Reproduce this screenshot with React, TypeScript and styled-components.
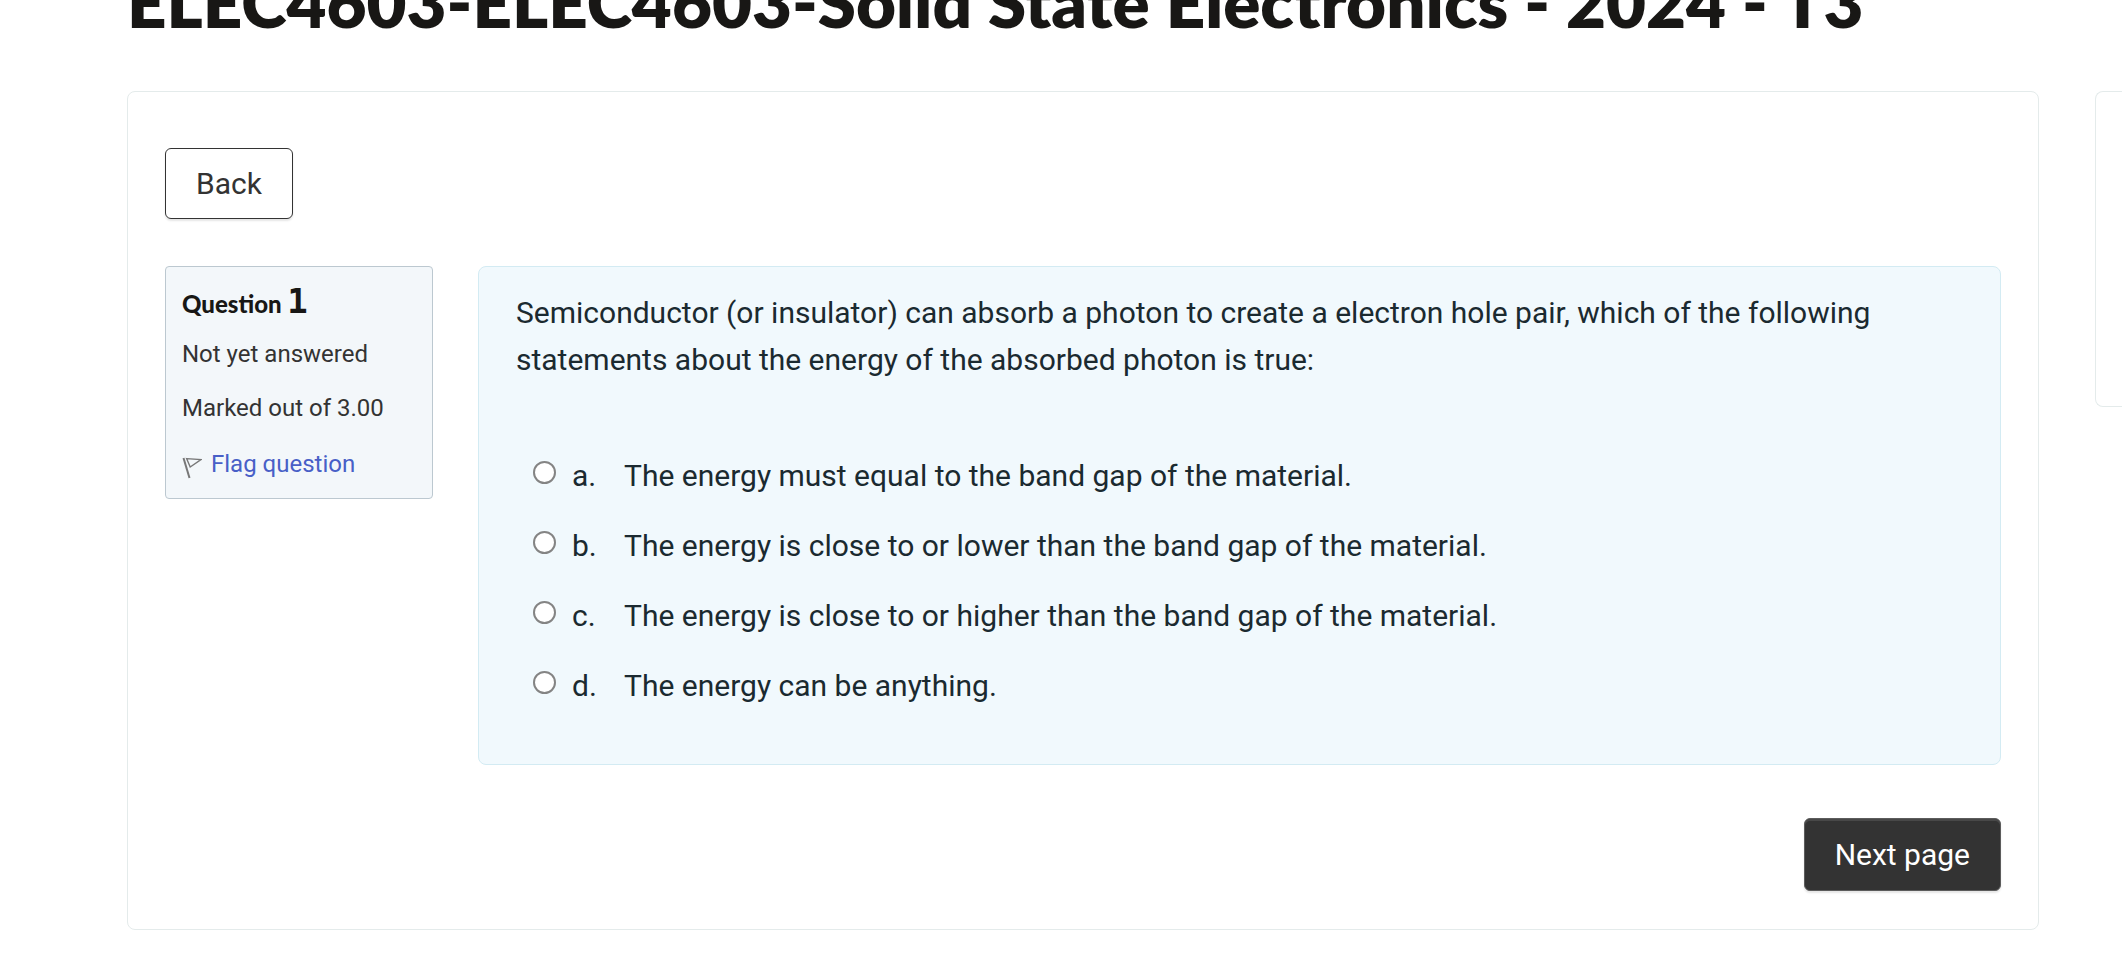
import React from "react";
import styled, { createGlobalStyle } from "styled-components";

const GlobalStyle = createGlobalStyle`
  *, *::before, *::after { box-sizing: border-box; }
  body {
    margin: 0;
    background: #fff;
    color: #333;
    font-family: Roboto, "Liberation Sans", sans-serif;
    font-size: 30px;
    line-height: 47px;
    overflow-x: hidden;
  }
`;

const Page = styled.div`
  padding-left: 127px;
`;

const Header = styled.header`
  height: 91px;
  overflow: hidden;
`;

const Title = styled.h1`
  margin: -44px 0 0;
  color: #181715;
  font-family: Lato, sans-serif;
  font-size: 69px;
  font-weight: 800;
  line-height: 92px;
  white-space: nowrap;
`;

const Columns = styled.div`
  display: flex;
  align-items: flex-start;
  gap: 56px;
`;

const Card = styled.main`
  flex: 1;
  min-width: 0;
  padding: 56px 37px 38px;
  border: 1px solid #e4ebeb;
  border-radius: 8px;
`;

const Drawer = styled.aside`
  flex: 0 0 27px;
  height: 316px;
  border: 1px solid #e4ebeb;
  border-right: 0;
  border-radius: 8px 0 0 8px;
`;

const Button = styled.button<{ $primary?: boolean }>`
  padding: ${(p) => (p.$primary ? "12px 30px" : "11px 30px")};
  border: 1px solid ${(p) => (p.$primary ? "#5c5c5c" : "#333")};
  border-radius: 6px;
  background: ${(p) => (p.$primary ? "#333" : "#fff")};
  box-shadow: ${(p) => (p.$primary ? "inset 0 2px 0 #484848, " : "")}0 2px 2px rgba(0, 0, 0, 0.1);
  color: ${(p) => (p.$primary ? "#fff" : "#333")};
  font: inherit;
  cursor: pointer;
`;

const Question = styled.section`
  display: flex;
  align-items: flex-start;
  gap: 45px;
  margin-top: 47px;
`;

const Info = styled.div`
  flex: 0 0 268px;
  padding: 13px 16px 19px;
  border: 1px solid #bcc8d0;
  border-radius: 4px;
  background: #f3f7fa;
  font-size: 24px;
  line-height: 30px;
`;

const Number = styled.h2`
  margin: 0 0 14px;
  color: #181715;
  font-family: Lato, sans-serif;
  font-size: 24px;
  font-weight: 900;
  line-height: 42px;
`;

const Digit = styled.span`
  font-family: "DejaVu Sans Mono", monospace;
  font-size: 34px;
  font-weight: 700;
`;

const InfoLine = styled.div`
  margin-bottom: 24px;
`;

const FlagLink = styled.a`
  display: flex;
  align-items: flex-end;
  gap: 9px;
  margin-top: 26px;
  color: #485fc7;
  text-decoration: none;
`;

const Formulation = styled.div`
  flex: 1;
  min-width: 0;
  padding: 22px 37px 55px;
  border: 1px solid #d3ebf3;
  border-radius: 8px;
  background: #f1f9fd;
  color: #1b2a30;
`;

const Prompt = styled.p`
  margin: 0 0 69px;
`;

const Answers = styled.fieldset`
  display: flex;
  flex-direction: column;
  gap: 23px;
  margin: 0;
  padding: 0 0 0 17px;
  border: 0;
`;

const Answer = styled.div`
  display: flex;
  align-items: flex-start;
`;

const Radio = styled.input`
  appearance: none;
  width: 23px;
  height: 23px;
  margin: 9px 16px 0 0;
  border: 2px solid #848484;
  border-radius: 50%;
  background: #fff;

  &:checked {
    border-color: #485fc7;
    background: radial-gradient(circle, #485fc7 6px, #fff 7px);
  }
`;

const AnswerLabel = styled.label`
  display: flex;
`;

const Letter = styled.span`
  width: 52px;
`;

const Footer = styled.div`
  display: flex;
  justify-content: flex-end;
  margin-top: 53px;
`;

const answers = [
  "The energy must equal to the band gap of the material.",
  "The energy is close to or lower than the band gap of the material.",
  "The energy is close to or higher than the band gap of the material.",
  "The energy can be anything.",
];

const FlagIcon = () => (
  <svg width="20" height="22" viewBox="0 0 20 22" fill="none" stroke="#777" aria-hidden="true">
    <path d="M1.5 1 7.5 21" strokeWidth="2" />
    <path d="M4.6 1.6 19 2.6 8.2 10Z" strokeWidth="1.4" />
  </svg>
);

export default function App() {
  return (
    <Page>
      <GlobalStyle />
      <Header>
        <Title>ELEC4603-ELEC4603-Solid State Electronics - 2024 - T3</Title>
      </Header>
      <Columns>
        <Card>
          <Button type="button">Back</Button>
          <Question>
            <Info>
              <Number>
                Question <Digit>1</Digit>
              </Number>
              <InfoLine>Not yet answered</InfoLine>
              <InfoLine>Marked out of 3.00</InfoLine>
              <FlagLink href="#flag">
                <FlagIcon />
                Flag question
              </FlagLink>
            </Info>
            <Formulation>
              <Prompt id="prompt">
                Semiconductor (or insulator) can absorb a photon to create a electron hole pair, which of the following
                statements about the energy of the absorbed photon is true:
              </Prompt>
              <Answers aria-labelledby="prompt">
                {answers.map((text, i) => (
                  <Answer key={text}>
                    <Radio type="radio" name="answer" id={`answer-${i}`} />
                    <AnswerLabel htmlFor={`answer-${i}`}>
                      <Letter>{"abcd"[i]}.</Letter>
                      <span>{text}</span>
                    </AnswerLabel>
                  </Answer>
                ))}
              </Answers>
            </Formulation>
          </Question>
          <Footer>
            <Button type="submit" $primary>
              Next page
            </Button>
          </Footer>
        </Card>
        <Drawer />
      </Columns>
    </Page>
  );
}
